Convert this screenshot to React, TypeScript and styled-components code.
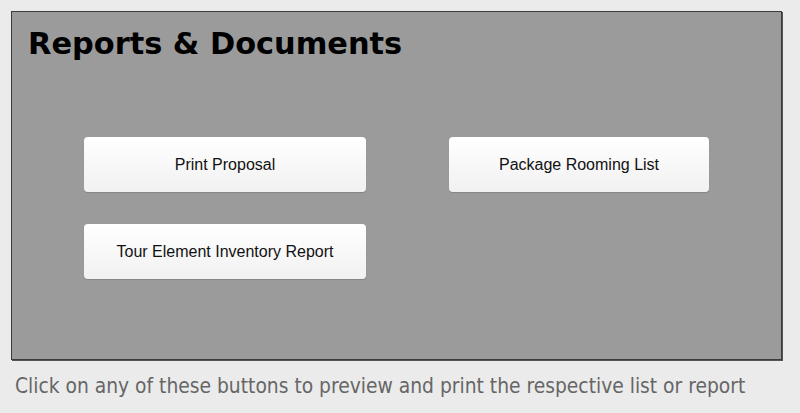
import styled, { createGlobalStyle } from "styled-components";

const GlobalStyle = createGlobalStyle`
  html, body {
    margin: 0;
    padding: 0;
    background-color: #ebebeb;
  }
`;

const Page = styled.div`
  width: 800px;
  height: 413px;
  padding: 11px 18px 0 11px;
  box-sizing: border-box;
`;

const Panel = styled.div`
  height: 349px;
  box-sizing: border-box;
  background-color: #9b9b9b;
  border: 1px solid #3c3c3c;
  box-shadow: 1px 1px 0 #555;
  padding: 13px 0 0 16px;
`;

const Title = styled.h1`
  margin: 0;
  font-family: "DejaVu Sans", Verdana, sans-serif;
  font-weight: bold;
  font-size: 30.4px;
  line-height: 38px;
  color: #000;
`;

const ButtonGrid = styled.div`
  display: grid;
  grid-template-columns: 282px 260px;
  column-gap: 83px;
  row-gap: 32px;
  margin: 74px 0 0 56px;
`;

const ReportButton = styled.button`
  height: 55px;
  border: none;
  border-radius: 4px;
  background: linear-gradient(#ffffff, #f1f1f1);
  font-family: "Liberation Sans", Arial, sans-serif;
  font-size: 16px;
  padding-top: 2px;
  color: #111;
  cursor: pointer;
  box-shadow: 0 1px 1px rgba(0, 0, 0, 0.15);
`;

const Hint = styled.p`
  margin: 14px 0 0 4px;
  font-family: "DejaVu Sans Condensed", "DejaVu Sans", sans-serif;
  font-size: 20.8px;
  color: #666;
`;

const buttons = ["Print Proposal", "Package Rooming List", "Tour Element Inventory Report"];

const App = () => {
  return (
    <>
      <GlobalStyle />
      <Page>
        <Panel>
          <Title>Reports &amp; Documents</Title>
          <ButtonGrid>
            {buttons.map((label) => (
              <ReportButton key={label}>{label}</ReportButton>
            ))}
          </ButtonGrid>
        </Panel>
        <Hint>Click on any of these buttons to preview and print the respective list or report</Hint>
      </Page>
    </>
  );
};

export default App;
